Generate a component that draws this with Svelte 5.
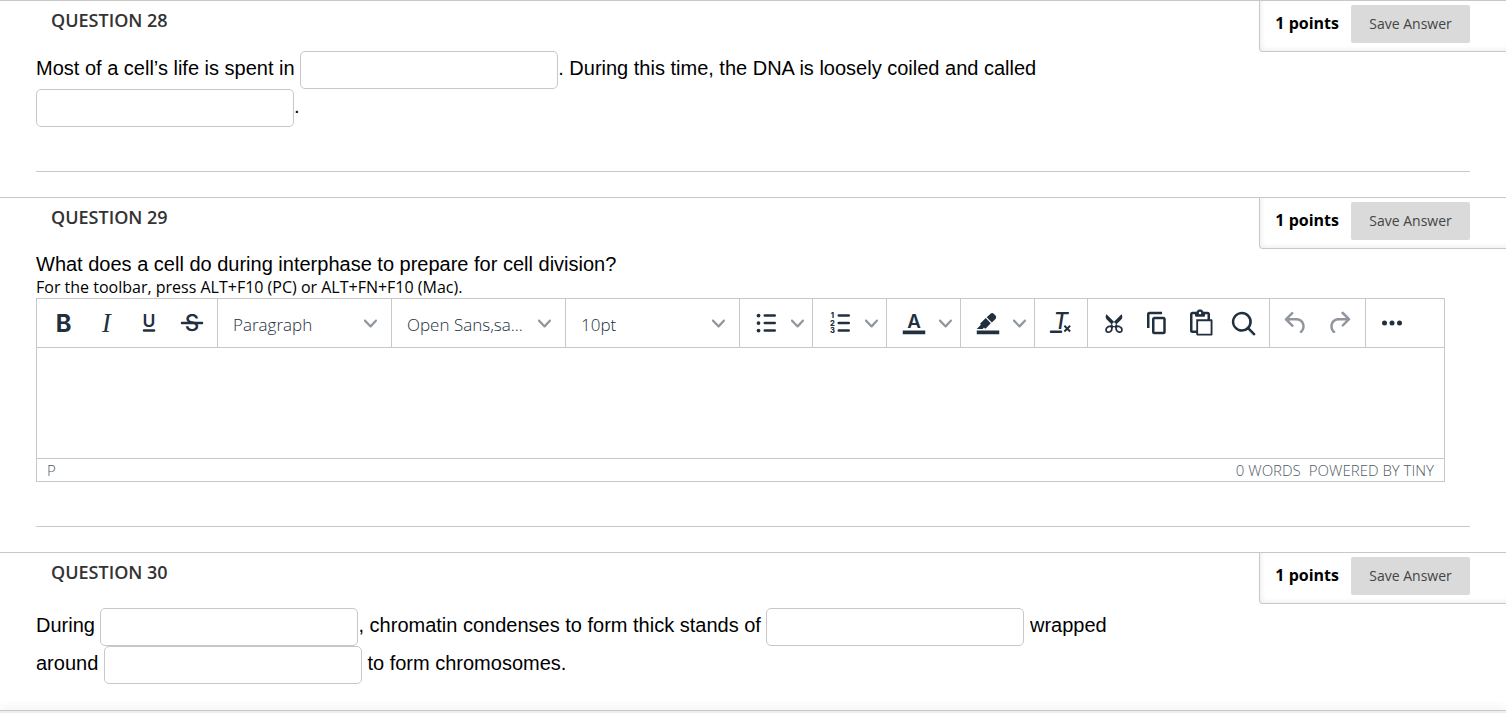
<script lang="ts">
  let editorText = $state('');
  let wordCount = $derived(editorText.split(/\s+/).filter(Boolean).length);

  const dropdowns = [
    { label: 'Blocks', options: ['Paragraph', 'Heading', 'Preformatted'] },
    { label: 'Fonts', options: ['Open Sans,sa...', 'Arial', 'Georgia'] },
    { label: 'Font sizes', options: ['10pt', '12pt', '14pt', '18pt'] },
  ];

  const splitButtons = [
    { label: 'Bullet list', icon: 'bullets' },
    { label: 'Numbered list', icon: 'numbers' },
    { label: 'Text color', icon: 'color' },
    { label: 'Highlight color', icon: 'highlight' },
  ];
</script>

{#snippet header(num: number)}
  <header class="question-header">
    <h2>QUESTION {num}</h2>
    <div class="points">
      <strong>1 points</strong>
      <button type="button" class="save">Save Answer</button>
    </div>
  </header>
{/snippet}

{#snippet icon(name: string)}
  <svg class="icon" viewBox="0 0 24 24" aria-hidden="true">
    {#if name === 'bold'}
      <text x="12.5" y="19" class="glyph bold">B</text>
    {:else if name === 'italic'}
      <text x="12.3" y="19" class="glyph italic">I</text>
    {:else if name === 'underline'}
      <text x="12" y="15.5" class="glyph under">U</text>
      <path d="M8 17h8a1 1 0 010 2H8a1 1 0 010-2z" />
    {:else if name === 'strike'}
      <text x="12" y="18.5" class="glyph strike">S</text>
      <path d="M4 11h16a1 1 0 010 2H4a1 1 0 010-2z" />
    {:else if name === 'bullets'}
      <path d="M11 5h8a1 1 0 010 2h-8a1 1 0 010-2zM11 11h8a1 1 0 010 2h-8a1 1 0 010-2zM11 17h8a1 1 0 010 2h-8a1 1 0 010-2z" />
      <circle cx="6" cy="6" r="1.5" /><circle cx="6" cy="12" r="1.5" /><circle cx="6" cy="18" r="1.5" />
    {:else if name === 'numbers'}
      <path d="M11 5h8a1 1 0 010 2h-8a1 1 0 010-2zM11 11h8a1 1 0 010 2h-8a1 1 0 010-2zM11 17h8a1 1 0 010 2h-8a1 1 0 010-2z" />
      <text x="6" y="8" class="glyph digit">1</text>
      <text x="6" y="14.1" class="glyph digit">2</text>
      <text x="6" y="20.2" class="glyph digit">3</text>
    {:else if name === 'color'}
      <path d="M3 18h18v3H3z" />
      <text x="12" y="16" class="glyph color">A</text>
    {:else if name === 'highlight'}
      <path d="M3 18h18v3H3z" />
      <path d="M7.7 16.7H3l3.3-3.3-.7-.8L10.2 8l4 4.1-4 4.2c-.2.2-.6.2-.8 0l-.6-.7-1.1 1.1zm5-7.5L11 7.4l3-2.9a2 2 0 012.6 0L18 6c.7.7.7 2 0 2.7l-2.9 2.9-1.8-1.8-.6-.6z" />
    {:else if name === 'clear'}
      <text x="11.8" y="17" class="glyph clear">T</text>
      <path d="M4 18h8a1 1 0 010 2H4a1 1 0 010-2z" />
      <path d="M14.7 14.2l4.6 4.6m0-4.6l-4.6 4.6" class="cross" />
    {:else if name === 'cut'}
      <path d="M18 15c.6.7 1 1.4 1 2.3 0 .8-.2 1.5-.7 2l-.8.5-1 .2c-.4 0-.8 0-1.2-.3a3.9 3.9 0 01-2.1-2.2c-.2-.5-.3-1-.2-1.5l-1-1-1 1c0 .5 0 1-.2 1.5-.1.5-.4 1-.9 1.4-.3.4-.7.6-1.2.8l-1.2.3c-.4 0-.7 0-1-.2-.3 0-.6-.3-.8-.5-.5-.5-.8-1.2-.7-2 0-.9.4-1.6 1-2.2A3.7 3.7 0 018.6 14H9l1-1-4-4-.5-1a3.3 3.3 0 010-2c0-.4.3-.7.5-1l6 6 6-6 .5 1a3.3 3.3 0 010 2c0 .4-.3.7-.5 1l-4 4 1 1h.5c.4 0 .8 0 1.2.3.5.2.9.4 1.2.7zm-8.5 2.2l.1-.4v-.7a1 1 0 00-.2-.5 1 1 0 00-.4-.2 1.6 1.6 0 00-.8 0 2.6 2.6 0 00-.8.3 2.5 2.5 0 00-.9 1.1l-.1.4v.7l.2.5.5.2h.7a2.5 2.5 0 00.8-.3 2.8 2.8 0 00.9-1.1zm2.5-2.8c.4 0 .7-.1 1-.4.3-.3.4-.6.4-1s-.1-.7-.4-1c-.3-.3-.6-.4-1-.4s-.7.1-1 .4c-.3.3-.4.6-.4 1s.1.7.4 1c.3.3.6.4 1 .4zm5.4 4l.2-.5v-.7a2.6 2.6 0 00-.3-.8 2.4 2.4 0 00-.7-.7 2.5 2.5 0 00-.8-.3 1.5 1.5 0 00-.8 0 1 1 0 00-.4.2 1 1 0 00-.2.5 1.5 1.5 0 000 .7l.1.4.2.4.3.4a2.8 2.8 0 00.8.5l.4.1h.7l.5-.2z" />
    {:else if name === 'copy'}
      <path d="M16 3H6a2 2 0 00-2 2v11h2V5h10V3zm1 4a2 2 0 012 2v10a2 2 0 01-2 2h-7a2 2 0 01-2-2V9c0-1.2.9-2 2-2h7zm0 12V9h-7v10h7z" />
    {:else if name === 'paste'}
      <path fill-rule="evenodd" d="M18 9V5h-2v1c0 .6-.4 1-1 1H9a1 1 0 01-1-1V5H6v13h3V9h9zM9 20H6a2 2 0 01-2-2V5c0-1.1.9-2 2-2h3.2A3 3 0 0112 1a3 3 0 012.8 2H18a2 2 0 012 2v4h1c.6 0 1 .4 1 1v11c0 .6-.4 1-1 1H10a1 1 0 01-1-1v-1zm1.5-9.5v10h10v-10h-10zM12 3a1 1 0 00-1 1 1 1 0 002 0 1 1 0 00-1-1z" />
    {:else if name === 'search'}
      <path d="M16 17.3a8 8 0 111.4-1.4l4.3 4.4a1 1 0 01-1.4 1.4l-4.4-4.3zm-5-.3a6 6 0 100-12 6 6 0 000 12z" />
    {:else if name === 'undo'}
      <path d="M6.4 8H12c3.7 0 6.2 2 6.8 5.1.6 2.7-.4 5.6-2.3 6.8a1 1 0 01-1-1.8c1.1-.6 1.8-2.7 1.4-4.6-.5-2.1-2.1-3.5-4.9-3.5H6.4l3.3 3.3a1 1 0 11-1.4 1.4l-5-5a1 1 0 010-1.4l5-5a1 1 0 011.4 1.4L6.4 8z" />
    {:else if name === 'redo'}
      <path d="M17.6 10H12c-2.8 0-4.4 1.4-4.9 3.5-.4 2 .3 4 1.4 4.6a1 1 0 11-1 1.8c-2-1.2-2.9-4.1-2.3-6.8.6-3 3-5.1 6.8-5.1h5.6l-3.3-3.3a1 1 0 111.4-1.4l5 5a1 1 0 010 1.4l-5 5a1 1 0 01-1.4-1.4l3.3-3.3z" />
    {:else if name === 'more'}
      <circle cx="6" cy="12" r="2" /><circle cx="12" cy="12" r="2" /><circle cx="18" cy="12" r="2" />
    {/if}
  </svg>
{/snippet}

{#snippet chevron()}
  <svg class="chevron" viewBox="0 0 10 10" aria-hidden="true">
    <path d="M8.7 2.2c.3-.3.8-.3 1 0 .4.4.4.9 0 1.2L5.7 7.8c-.3.3-.9.3-1.2 0L.2 3.4a.8.8 0 010-1.2c.3-.3.8-.3 1.1 0L5 6l3.7-3.8z" />
  </svg>
{/snippet}

{#snippet tool(label: string, name: string, disabled = false)}
  <button type="button" class="tool" aria-label={label} {disabled}>{@render icon(name)}</button>
{/snippet}

<main>
  <section class="question">
    {@render header(28)}
    <div class="body">
      <p class="blanks">
        Most of a cell’s life is spent in <input type="text" aria-label="Blank 1" />. During this time, the DNA is
        loosely coiled and called <input type="text" aria-label="Blank 2" />.
      </p>
    </div>
  </section>

  <section class="question">
    {@render header(29)}
    <div class="body">
      <p class="prompt">What does a cell do during interphase to prepare for cell division?</p>
      <label class="hint" for="answer">For the toolbar, press ALT+F10 (PC) or ALT+FN+F10 (Mac).</label>
      <div class="editor">
        <div class="toolbar" role="toolbar" aria-label="Formatting">
          <div class="group">
            {@render tool('Bold', 'bold')}
            {@render tool('Italic', 'italic')}
            {@render tool('Underline', 'underline')}
            {@render tool('Strikethrough', 'strike')}
          </div>
          {#each dropdowns as d}
            <div class="group dropdown">
              <select aria-label={d.label}>
                {#each d.options as option}
                  <option>{option}</option>
                {/each}
              </select>
              {@render chevron()}
            </div>
          {/each}
          {#each splitButtons as s}
            <div class="group split">
              {@render tool(s.label, s.icon)}
              <button type="button" class="arrow" aria-label="{s.label} menu">{@render chevron()}</button>
            </div>
          {/each}
          <div class="group">{@render tool('Clear formatting', 'clear')}</div>
          <div class="group">
            {@render tool('Cut', 'cut')}
            {@render tool('Copy', 'copy')}
            {@render tool('Paste', 'paste')}
            {@render tool('Find and replace', 'search')}
          </div>
          <div class="group">
            {@render tool('Undo', 'undo', true)}
            {@render tool('Redo', 'redo', true)}
          </div>
          <div class="group last">{@render tool('More', 'more')}</div>
        </div>
        <textarea id="answer" bind:value={editorText}></textarea>
        <div class="statusbar">
          <span class="path">P</span>
          <span>{wordCount} WORDS</span>
          <a href="#tiny">POWERED BY TINY</a>
        </div>
      </div>
    </div>
  </section>

  <section class="question">
    {@render header(30)}
    <div class="body last-body">
      <p class="blanks">
        During <input type="text" aria-label="Blank 1" />, chromatin condenses to form thick stands of
        <input type="text" aria-label="Blank 2" /> wrapped around&nbsp;<input type="text" aria-label="Blank 3" /> to
        form chromosomes.
      </p>
    </div>
  </section>
</main>
<footer></footer>

<style>
  :global(body) {
    margin: 0;
    background: #fff;
    font-family: 'Open Sans', sans-serif;
    color: #000;
  }
  button, select, textarea, input {
    font-family: inherit;
    box-sizing: border-box;
    margin: 0;
  }
  .question {
    border-top: 1px solid #c8c8c8;
    padding-bottom: 25px;
  }
  .question:last-child {
    padding-bottom: 0;
  }
  .question-header {
    display: flex;
    justify-content: space-between;
    align-items: flex-start;
    height: 50px;
  }
  h2 {
    margin: 7px 0 0 51px;
    font-size: 18px;
    line-height: 24px;
    font-weight: 600;
    color: #333;
  }
  .points {
    display: flex;
    align-items: flex-start;
    gap: 12px;
    padding: 4px 36px 8px 15px;
    border: solid #c8c8c8;
    border-width: 0 0 1px 1px;
    border-bottom-left-radius: 4px;
    box-shadow: inset 2px -2px 4px rgba(0, 0, 0, 0.06);
  }
  .points strong {
    font-size: 16px;
    line-height: 36px;
  }
  .save {
    min-width: 119px;
    height: 38px;
    padding: 0 18px 2px;
    border: 0;
    border-radius: 2px;
    background: #dadada;
    color: #444;
    font-size: 14px;
    cursor: pointer;
  }
  .body {
    margin: 0 36px;
    padding-bottom: 44px;
    border-bottom: 1px solid #c8c8c8;
  }
  .last-body {
    padding: 5px 0 26px;
    border-bottom: 0;
  }
  .blanks, .prompt {
    margin: 0;
    font-family: 'Liberation Sans', Arial, sans-serif;
    font-size: 20px;
    line-height: 24px;
  }
  .blanks {
    max-width: 1100px;
  }
  .blanks input {
    width: 258px;
    height: 38px;
    padding: 0 8px;
    border: 1px solid #c8c8c8;
    border-radius: 5px;
    background: #fff;
    font-size: 14px;
  }
  .prompt {
    padding-top: 4px;
  }
  .hint {
    display: block;
    font-size: 16px;
    line-height: 22px;
  }
  .editor {
    margin-right: 25px;
    border: 1px solid #c8c8c8;
  }
  .toolbar {
    display: grid;
    grid-template-columns: 181px repeat(3, 174px) 73px repeat(3, 74px) 53px 182px 96px 1fr;
    height: 48px;
    border-bottom: 1px solid #c8c8c8;
  }
  .group {
    display: flex;
    align-items: center;
    justify-content: center;
    border-right: 1px solid #c8c8c8;
  }
  .group.last {
    justify-content: flex-start;
    padding-left: 4px;
    border-right: 0;
  }
  .tool, .arrow {
    display: flex;
    align-items: center;
    justify-content: center;
    width: 43px;
    height: 42px;
    padding: 0;
    border: 0;
    background: none;
    cursor: pointer;
  }
  .arrow {
    width: 20px;
  }
  .tool:disabled {
    opacity: 0.5;
  }
  .icon {
    width: 30px;
    height: 30px;
    fill: #222f3e;
  }
  .chevron {
    width: 13px;
    height: 13px;
    flex: none;
    fill: #222f3e;
    opacity: 0.5;
    pointer-events: none;
  }
  .glyph {
    text-anchor: middle;
    font-family: Inter, sans-serif;
  }
  .bold { font-size: 19px; font-weight: 700; }
  .italic { font-family: 'Liberation Serif', serif; font-size: 21px; font-style: italic; }
  .under { font-size: 14px; font-weight: 600; }
  .strike { font-size: 18px; font-weight: 500; }
  .digit { font-size: 6px; font-weight: 800; }
  .color { font-size: 15px; font-weight: 600; }
  .clear { font-size: 18px; font-weight: 500; font-style: italic; }
  .cross { fill: none; stroke: #222f3e; stroke-width: 1.5; }
  .dropdown {
    padding-right: 14px;
  }
  .dropdown select {
    flex: 1;
    min-width: 0;
    height: 42px;
    padding: 3px 0 0 15px;
    border: 0;
    appearance: none;
    background: none;
    color: #222f3e;
    font-size: 17px;
    font-weight: 300;
  }
  textarea {
    display: block;
    width: 100%;
    height: 110px;
    padding: 10px;
    border: 0;
    resize: none;
    outline: none;
    font-size: 13px;
  }
  .statusbar {
    display: flex;
    gap: 8px;
    height: 22px;
    padding: 0 10px;
    border-top: 1px solid #c8c8c8;
    color: #505a66;
    font-size: 15px;
    font-weight: 300;
    line-height: 23px;
  }
  .path {
    flex: 1;
  }
  .statusbar a {
    color: inherit;
    text-decoration: none;
  }
  footer {
    height: 2px;
    border-top: 1px solid #c8c8c8;
    background: #eee;
    box-shadow: 0 -2px 8px -1px rgba(0, 0, 0, 0.3);
  }
</style>
